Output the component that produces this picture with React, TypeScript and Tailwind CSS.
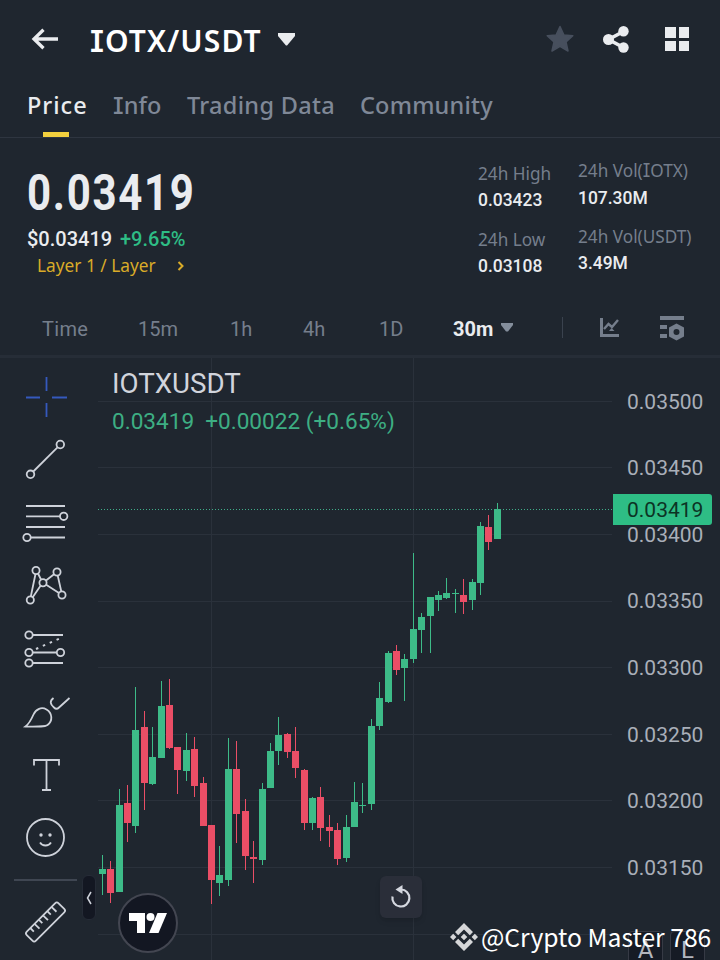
import { FC, ReactNode } from "react";

type Candle = [x: number, high: number, top: number, bottom: number, low: number, up: 0 | 1];

const candles: Candle[] = [
  [102, 855, 869, 874, 895, 1],
  [110, 861, 869, 893, 903, 0],
  [119, 789, 805, 892, 892, 1],
  [127, 785, 803, 823, 842, 0],
  [135, 687, 730, 826, 833, 1],
  [144, 711, 727, 783, 810, 0],
  [152, 727, 757, 784, 785, 1],
  [161, 681, 706, 758, 758, 1],
  [169, 679, 705, 748, 749, 0],
  [177, 747, 747, 770, 794, 0],
  [186, 733, 750, 771, 781, 1],
  [194, 737, 749, 786, 797, 0],
  [203, 777, 783, 826, 826, 0],
  [211, 825, 825, 880, 904, 0],
  [219, 846, 875, 883, 896, 1],
  [228, 738, 769, 880, 886, 1],
  [236, 741, 769, 814, 843, 0],
  [245, 799, 811, 856, 870, 0],
  [253, 841, 857, 859, 883, 0],
  [262, 783, 789, 860, 865, 1],
  [270, 743, 751, 788, 788, 1],
  [278, 717, 735, 751, 765, 1],
  [287, 733, 734, 752, 758, 0],
  [295, 727, 751, 768, 778, 0],
  [304, 769, 770, 823, 830, 0],
  [312, 797, 798, 823, 830, 1],
  [320, 787, 797, 828, 841, 0],
  [329, 815, 827, 831, 847, 0],
  [337, 823, 830, 859, 865, 0],
  [346, 815, 827, 858, 862, 1],
  [354, 782, 802, 827, 827, 1],
  [362, 783, 805, 806, 813, 1],
  [371, 719, 726, 804, 810, 1],
  [379, 682, 698, 726, 730, 1],
  [388, 651, 653, 702, 703, 1],
  [396, 645, 651, 670, 675, 0],
  [404, 654, 659, 668, 701, 1],
  [413, 553, 629, 659, 663, 1],
  [421, 613, 617, 630, 653, 1],
  [430, 597, 597, 616, 653, 1],
  [438, 591, 595, 600, 611, 1],
  [446, 578, 593, 598, 599, 1],
  [455, 589, 593, 594, 613, 1],
  [463, 579, 595, 602, 614, 0],
  [472, 579, 582, 600, 610, 1],
  [480, 522, 526, 583, 595, 1],
  [488, 515, 527, 542, 550, 0],
  [497, 503, 509, 539, 539, 1],
];

const gridLines = [401, 467, 534, 601, 667, 734, 800, 867, 934];
const prices = ["0.03500", "0.03450", "0.03400", "0.03350", "0.03300", "0.03250", "0.03200", "0.03150"];

// capital I with serifs
const SerifI: FC = () => <span className="font-['Inter'] [font-feature-settings:'cv08']">I</span>;

const Header: FC = () => (
  <header className="flex h-[78px] items-center pl-[31px] pr-[31px]">
    <svg width="28" height="22" viewBox="0 0 28 22" fill="none" stroke="#eaecef" strokeWidth="3.3">
      <path d="M27 11H3M12.5 1.8L3 11l9.500 9.200" />
    </svg>
    <h1 className="ml-[31px] mt-[3px] w-[173px] whitespace-nowrap font-['Noto_Sans'] text-[30px] font-semibold leading-10 tracking-[1.1px] text-white">
      <SerifI />
      OTX/USDT
    </h1>
    <svg className="ml-[15px]" width="17" height="13" viewBox="0 0 17 13" fill="#eaecef">
      <path d="M0 0h17v3L9.500 12q-1 1-2 0L0 3z" />
    </svg>
    <div className="ml-auto flex items-center">
      <svg width="28" height="28" viewBox="0 0 28 28" fill="#474f5d" stroke="#474f5d" strokeWidth="1.500" strokeLinejoin="round">
        <path d="M14 1.500l3.800 8.400 9 .9-6.800 6.100 2 9.100-8-4.700-8 4.700 2-9.100-6.800-6.100 9-.9z" />
      </svg>
      <svg className="ml-[29px]" width="26" height="27" viewBox="0 0 26 27" fill="#eaecef">
        <path d="M20.500 5.500L5.500 13.500l15 8" fill="none" stroke="#eaecef" strokeWidth="3.600" />
        <circle cx="20.500" cy="5.300" r="5.200" />
        <circle cx="5.500" cy="13.500" r="5.500" />
        <circle cx="20.500" cy="21.500" r="5.200" />
      </svg>
      <div className="ml-9 grid grid-cols-2 gap-[3px]">
        <i className="h-[10.500px] w-[10.500px] bg-[#eaecef]" />
        <i className="h-[10.500px] w-[10.500px] bg-[#eaecef]" />
        <i className="h-[10.500px] w-[10.500px] bg-[#eaecef]" />
        <i className="h-[10.500px] w-[10.500px] bg-[#eaecef]" />
      </div>
    </div>
  </header>
);

const Tabs: FC = () => (
  <nav className="flex h-[60px] whitespace-nowrap border-b border-[#2e3540] pl-[27px] pt-[9px] font-['Noto_Sans'] text-[23.500px] font-medium leading-9 tracking-[0.3px] text-[#7f8897]">
    <div className="flex w-[86px] flex-col">
      <span className="tracking-[1px] text-[#eaecef]">Price</span>
      <span className="ml-4 mt-[9px] h-[5px] w-[26px] bg-[#f3d03e]" />
    </div>
    <span className="w-[74px] tracking-[0.1px]">
      <SerifI />
      nfo
    </span>
    <span className="w-[173px]">Trading Data</span>
    <span className="tracking-[0.2px]">Community</span>
  </nav>
);

const Stat: FC<{ label: ReactNode; value: string }> = ({ label, value }) => (
  <div className="h-[66px] whitespace-nowrap">
    <div className="origin-left scale-x-[0.955] font-['Noto_Sans'] text-[18px] leading-[26px] text-[#757e8c]">
      {label}
    </div>
    <div className="origin-left scale-x-[0.97] font-['Roboto'] text-[18px] font-medium leading-7 text-[#eaecef]">
      {value}
    </div>
  </div>
);

const Summary: FC = () => (
  <section className="flex h-[162px] pl-[27px]">
    <div className="w-[451px] whitespace-nowrap pt-[26px]">
      <div className="h-[62px] origin-left scale-x-[0.84] font-['Roboto'] text-[50px] font-bold leading-[58px] tracking-[2px] text-[#eaecef]">
        0.03419
      </div>
      <div className="flex h-[26px] items-center font-['Roboto'] text-[20px] font-medium">
        <span className="w-[93px] text-[#eaecef]">$0.03419</span>
        <span className="text-[#2ebd85]">+9.65%</span>
      </div>
      <div className="flex h-[27px] items-center pl-[10px] text-[#d9ab28]">
        <span className="w-[140px] origin-left scale-x-[0.96] font-['Noto_Sans'] text-[18px]">Layer 1 / Layer</span>
        <svg width="8" height="10" viewBox="0 0 8 10" fill="none" stroke="currentColor" strokeWidth="2">
          <path d="M1.500 1l4 4-4 4" />
        </svg>
      </div>
    </div>
    <div className="w-[100px] pt-[22px]">
      <Stat label="24h High" value="0.03423" />
      <Stat label="24h Low" value="0.03108" />
    </div>
    <div className="pt-[19px]">
      <Stat label={<>24h Vol(<SerifI />OTX)</>} value="107.30M" />
      <Stat label="24h Vol(USDT)" value="3.49M" />
    </div>
  </section>
);

const Intervals: FC = () => (
  <div className="flex h-[55px] items-center whitespace-nowrap pl-[42px] font-['Roboto'] text-[20px] text-[#757e8c] [&>span]:pt-0.5">
    <span className="w-24 tracking-[0.3px]">Time</span>
    <span className="w-[92px]">15m</span>
    <span className="w-[73px]">1h</span>
    <span className="w-[76px]">4h</span>
    <span className="w-[74px]">1D</span>
    <span className="w-12 font-bold text-[#eaecef]">30m</span>
    <svg width="12" height="9" viewBox="0 0 12 9" fill="#848e9c">
      <path d="M0 0h12v2L7 8.500H5L0 2z" />
    </svg>
    <span className="ml-[49px] h-[21px] w-px bg-[#3a424e]" />
    <svg className="ml-[37px]" width="20" height="20" viewBox="0 0 20 20" fill="none" stroke="#757e8c">
      <path d="M1.500 0v17.500H19" strokeWidth="3" />
      <path d="M4 11l4.500-5 3.500 3 6-7" strokeWidth="2.400" />
      <path d="M9 13l2.500-3 3 3z" fill="#757e8c" stroke="none" />
    </svg>
    <svg className="ml-[39px]" width="26" height="26" viewBox="0 0 26 26" fill="#757e8c">
      <path d="M1 1h24v4H1zM1 10h7v4H1zM1 19h7v4H1z" />
      <path fillRule="evenodd" d="M17.500 8.500l7.500 4v9l-7.500 4-7.500-4v-9zM17.500 14a3 3 0 1 0 0 6 3 3 0 0 0 0-6z" />
    </svg>
  </div>
);

const Tool: FC<{ children: ReactNode }> = ({ children }) => (
  <svg className="h-[63px] w-[92px] shrink-0" viewBox="0 0 92 63" fill="none" stroke="#ced2da" strokeWidth="1.800">
    {children}
  </svg>
);

const Toolbar: FC = () => (
  <aside className="flex w-[98px] shrink-0 flex-col pt-[11px]">
    <Tool>
      <path d="M26 31.500h14M52 31.500h15M46.500 11v14M46.500 37v14" stroke="#3559bd" />
    </Tool>
    <Tool>
      <circle cx="60.300" cy="15.500" r="3.800" />
      <circle cx="30.500" cy="45.300" r="3.800" />
      <path d="M57.500 18.300L33.300 42.500" />
    </Tool>
    <Tool>
      <path d="M26 14h39M26 24.300h34M26 35h39M31 45.500h34" />
      <circle cx="63.700" cy="24.300" r="3.700" />
      <circle cx="27" cy="45.500" r="3.700" />
    </Tool>
    <Tool>
      <circle cx="36" cy="15.500" r="3.600" />
      <circle cx="57" cy="17" r="3.600" />
      <circle cx="43" cy="27.700" r="3.600" />
      <circle cx="62" cy="40" r="3.600" />
      <circle cx="30.300" cy="45" r="3.600" />
      <path d="M35.500 19l-4.700 22.500M38 18.500l3 6M46 25.500l8-6.200M57.700 20.500L61.300 36.500M46.200 29.700l12.800 8.300M40.700 30.500l-8 11.700" />
    </Tool>
    <Tool>
      <circle cx="29" cy="17" r="3.700" />
      <circle cx="29" cy="34.500" r="3.700" />
      <circle cx="60.500" cy="34.500" r="3.700" />
      <circle cx="29" cy="45" r="3.700" />
      <path d="M33 17h30M33 34.500h24M33 45h30" />
      <path d="M36 31l27-12" strokeWidth="2" strokeDasharray="2.500 5" />
    </Tool>
    <Tool>
      <path d="M25.500 45.500c4-3 6-7.500 8-12 2.500-5.500 8-8 13-5 6 3.500 6.500 11.500 1 15.500-3 2-8 1.800-22 1.500z" />
      <path d="M53.500 17c-4 3-3.500 6 .5 9.500 1.500 1.500 3.500 1.500 5 0L69.500 17" />
    </Tool>
    <Tool>
      <path d="M34 21.500v-5.500h25v5.500M46.500 16v30M42 46h9" />
    </Tool>
    <Tool>
      <circle cx="45.500" cy="30.500" r="18.500" />
      <path d="M40 35.500c2.500 4 8.500 4 11 0" />
      <circle cx="41" cy="28" r="1.700" fill="#ced2da" stroke="none" />
      <circle cx="50" cy="28" r="1.700" fill="#ced2da" stroke="none" />
    </Tool>
    <div className="ml-[14px] mt-[9px] h-0.5 w-[63px] shrink-0 bg-[#3f4652]" />
    <Tool>
      <g transform="translate(45.500 41) rotate(-45)">
        <rect x="-22.500" y="-6.500" width="45" height="13" rx="2.500" />
        <path d="M-15 -6.500v5M-9 -6.500v7M-3 -6.500v5M3 -6.500v7M9 -6.500v5M15 -6.500v7" />
      </g>
    </Tool>
  </aside>
);

const Plot: FC = () => (
  <svg className="shrink-0" width="515" height="605" viewBox="98 355 515 605" shapeRendering="crispEdges">
    <g fill="#2a313b">
      {gridLines.map((y) => (
        <rect key={y} x="98" y={y} width="514" height="1" />
      ))}
      <rect x="211" y="355" width="1" height="605" />
      <rect x="413" y="355" width="1" height="605" />
    </g>
    {candles.map(([x, high, top, bottom, low, up]) => (
      <g key={x} fill={up ? "#3dbb88" : "#ea4e66"}>
        <rect x={x} y={high} width="1" height={low - high} />
        <rect x={x - 3} y={top} width="7" height={bottom - top} />
      </g>
    ))}
    <path d="M98 509.500H613" stroke="#3fae8a" strokeDasharray="1 2" shapeRendering="auto" />
  </svg>
);

const PriceAxis: FC = () => (
  <div className="flex flex-col pl-[14px] pt-[14px] font-['Roboto'] text-[21px] text-[#a9afb9]">
    {prices.map((p) => (
      <div key={p} className="flex h-[66.600px] items-center">
        {p}
      </div>
    ))}
  </div>
);

const Chart: FC = () => (
  <section className="relative flex h-[605px] overflow-hidden">
    <Toolbar />
    <Plot />
    <PriceAxis />
    <div className="absolute inset-x-0 top-0 h-[3px] bg-[#262d37]" />
    <div className="absolute left-[112px] top-[13px] whitespace-nowrap font-['Roboto'] text-[27.700px] leading-8 text-[#d1d4dc]">
      IOTXUSDT
    </div>
    <div className="absolute left-[112px] top-[53px] flex gap-[11px] whitespace-nowrap font-['Roboto'] text-[22.600px] leading-7 text-[#3dae83]">
      <span>0.03419</span>
      <span>+0.00022 (+0.65%)</span>
    </div>
    <div className="absolute left-[613px] top-[139px] flex h-[31px] w-[99px] items-center rounded-r-[3px] bg-[#2ebd85] pl-[14px] pt-0.5 font-['Roboto'] text-[21px] text-[#0c3324]">
      0.03419
    </div>
    <div className="absolute left-[82px] top-[520px] flex h-[45px] w-[14px] items-center justify-center rounded-md border border-[#252b36] bg-[#131722]">
      <svg width="6" height="14" viewBox="0 0 6 14" fill="none" stroke="#ced2da" strokeWidth="1.500">
        <path d="M5 1L1.500 7 5 13" />
      </svg>
    </div>
    <div className="absolute left-[118px] top-[538px] flex h-[60px] w-[60px] items-center justify-center rounded-full border-2 border-[#434651] bg-[#131722]">
      <svg width="38" height="20" viewBox="0 0 38 20" fill="#fff">
        <path d="M0 0h16v20H8V8H0z" />
        <circle cx="21.500" cy="4" r="4" />
        <path d="M28.500 0H38l-8.500 20H20z" />
      </svg>
    </div>
    <div className="absolute left-[380px] top-[521px] flex h-[42px] w-[42px] items-center justify-center rounded-md bg-[#2a2e39] shadow-md">
      <svg width="22" height="24" viewBox="0 0 22 24" fill="none" stroke="#d5d8e0" strokeWidth="2.200">
        <path d="M2.500 11.500a8.500 8.500 0 1 0 8.500-7" />
        <path d="M12.500 0v9L5.500 4.500z" fill="#d5d8e0" stroke="none" />
      </svg>
    </div>
    <div className="absolute left-[628px] top-[576px] flex gap-[7px] font-['Roboto'] text-[24px] leading-[36px] text-[#b2b5be]">
      <span className="h-10 w-[35px] rounded border border-[#363a45] bg-[#161b25] text-center">A</span>
      <span className="h-10 w-[35px] rounded border border-[#363a45] bg-[#161b25] text-center">L</span>
    </div>
    <div className="absolute left-[450px] top-[563px] flex items-center whitespace-nowrap">
      <svg width="28" height="28" viewBox="0 0 28 28" fill="#d6d7d9">
        <path d="M14 0l9 9-3.200 3.200L14 6.400l-5.800 5.800L5 9zM14 28l9-9-3.200-3.200-5.800 5.800-5.800-5.800L5 19zM14 10.700l3.300 3.300-3.300 3.300-3.300-3.300zM3.200 10.800L6.400 14l-3.200 3.200L0 14zM24.800 10.800L28 14l-3.200 3.200L21.600 14z" />
      </svg>
      <span className="mb-0.5 ml-[3px] font-['Noto_Sans_CJK_SC'] text-[24.700px] leading-9 text-white">@Crypto Master 786</span>
    </div>
  </section>
);

const App: FC = () => (
  <main className="h-[960px] w-[720px] overflow-hidden bg-[#1f262f]">
    <Header />
    <Tabs />
    <Summary />
    <Intervals />
    <Chart />
  </main>
);

export default App;
